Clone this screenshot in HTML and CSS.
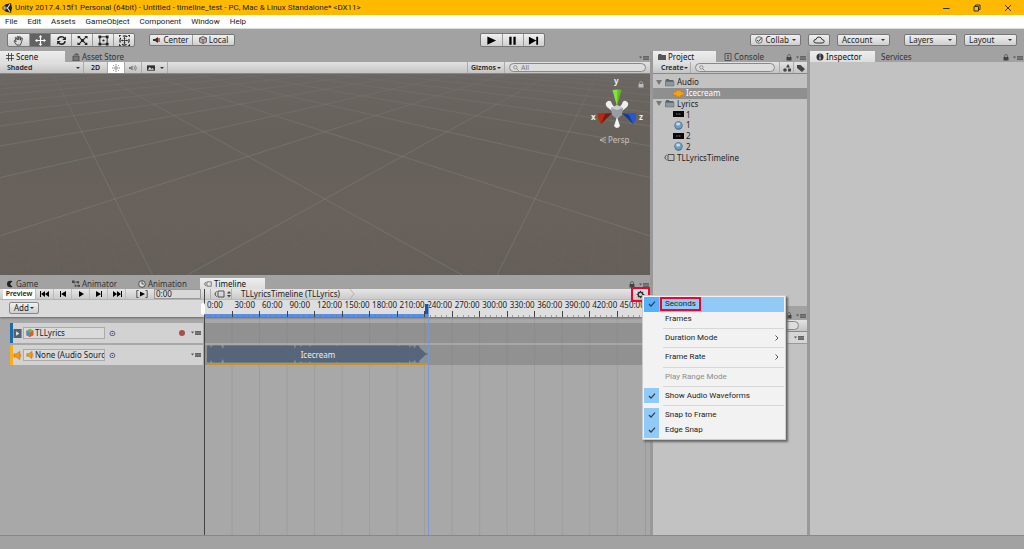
FILE: index.html
```html
<!DOCTYPE html>
<html lang="en">

<head>
    <meta charset="UTF-8">
    <meta name="viewport" content="width=device-width, initial-scale=1.0">
    <title>Unity 2017.4.15f1 Personal</title>
    <link rel="stylesheet" href="styles.css">
</head>

<body>

    <!-- shared icons -->
    <svg class="defs" width="0" height="0">
        <symbol id="lock" viewBox="0 0 6 7"><path d="M0.500 3h5v3.500h-5z" fill="#444"/><path d="M1.500 3V2a1.500 1.500 0 0 1 3 0v1" fill="none" stroke="#666"/></symbol>
        <symbol id="pane-menu" viewBox="0 0 10 6"><path d="M0 1.500h3L1.500 3.500z" fill="#555"/><path d="M4 1h6v4H4z" fill="#888"/><path d="M4 1.500h6M4 3h6M4 4.500h6" stroke="#555" stroke-width=".7"/></symbol>
        <symbol id="folder" viewBox="0 0 10 9"><path d="M1 8V2l1-1h2l1 1h4v6z" fill="#586266"/><path d="M1 8V3.500h8.500V8z" fill="#8a999c" stroke="#59666a" stroke-width=".5"/></symbol>
        <symbol id="search" viewBox="0 0 7 7"><circle cx="2.700" cy="2.700" r="2" fill="none" stroke="#777" stroke-width=".8"/><path d="M4.200 4.200L6.500 6.500" stroke="#777"/></symbol>
        <symbol id="timeline-icon" viewBox="0 0 11 8"><path d="M4 1h6v6H4z" fill="none" stroke="#444" stroke-width=".9"/><path d="M2.700 1.500Q1 2.500 1 4t1.700 2.500" fill="none" stroke="#444" stroke-width="1"/></symbol>
        <symbol id="material" viewBox="0 0 10 10"><circle cx="5" cy="5" r="4.600" fill="#426a8a"/><circle cx="5" cy="4.600" r="3.800" fill="#719dc0"/><ellipse cx="4.600" cy="3.300" rx="2.300" ry="1.700" fill="#c5dcea"/></symbol>
        <symbol id="texture" viewBox="0 0 11 7"><path d="M0 0h11v6H0z" fill="#080808"/><path d="M3 3h5" stroke="#999" stroke-dasharray="1 .5" stroke-width=".8"/></symbol>
        <symbol id="check" viewBox="0 0 8 8"><path d="M1 4l2 2.200L7 1.700" fill="none" stroke="#263b50" stroke-width="1.200"/></symbol>
        <symbol id="arrow" viewBox="0 0 5 8"><path d="M1.500 1.500L4 4 1.500 6.500" fill="none" stroke="#444" stroke-width=".9"/></symbol>
        <symbol id="speaker" viewBox="0 0 10 10"><path d="M1 3.300h2.500L7.500 0.500v9L3.500 6.700H1z" fill="#f59b12" stroke="#ad6807" stroke-width=".6"/><path d="M8.500 3v4" stroke="#b77519" stroke-width=".8"/></symbol>
    </svg>

    <div class="editor">
        <header class="titlebar">
            <svg class="logo" viewBox="0 0 12 12"><path d="M0 6l4.500-4.500L10.800.2 12 6l-1.200 5.800-6.300-1.300z" fill="#222"/><path d="M6.500 6L9.500 1.500M6.500 6l3 4.500M6.500 6H2" stroke="#ececec" stroke-width="1.300" fill="none"/><path d="M4 3.500L2 6l2 2.500" stroke="#ececec" fill="none"/></svg>
            <span class="title-text">Unity 2017.4.15f1 Personal (64bit) - Untitled - timeline_test - PC, Mac &amp; Linux Standalone* &lt;DX11&gt;</span>
            <div class="window-buttons">
                <button aria-label="Minimize"><svg viewBox="0 0 8 8"><path d="M1 4.500h6.500"/></svg></button>
                <button aria-label="Restore"><svg viewBox="0 0 8 8"><path d="M1 2.500h4.500V7H1zM2.500 2.500V1H7v4.500H5.500"/></svg></button>
                <button aria-label="Close"><svg viewBox="0 0 8 8"><path d="M1 1l6 6M7 1L1 7"/></svg></button>
            </div>
        </header>

        <nav class="menubar">
            <button>File</button><button>Edit</button><button>Assets</button><button>GameObject</button><button>Component</button><button>Window</button><button>Help</button>
        </nav>

        <div class="toolbar">
            <div class="toolbar-left">
                <div class="group tools">
                    <button aria-label="Hand"><svg viewBox="0 0 12 12"><path d="M4 11L1.500 7.500Q.8 6 2 6l1.300 1.400L2.300 3q.8-1.200 1.400 0L4.700 5.500 4.600 1.700q.9-1 1.400 0l.3 3.500.7-3.300q1-.9 1.300.1L8 5.700l1.200-2.500q1-.6 1.100.4L9.300 8 8 11z" fill="none" stroke="#222" stroke-width=".8"/></svg></button>
                    <button class="active" aria-label="Move"><svg viewBox="0 0 12 12"><path d="M6 1v10M1 6h10" stroke="#fff" stroke-width="1.300"/><path d="M6 0l2 2.500H4zM6 12L4 9.500h4zM0 6l2.500-2v4zM12 6L9.500 8V4z" fill="#fff"/></svg></button>
                    <button aria-label="Rotate"><svg viewBox="0 0 12 12"><path d="M2 5.300Q2.500 2 6 2q2 0 3.300 1.500M10 6.700Q9.500 10 6 10q-2 0-3.300-1.500" fill="none" stroke="#222" stroke-width="1.600"/><path d="M10.800 1.500v4h-4zM1.200 10.500v-4h4z" fill="#222"/></svg></button>
                    <button aria-label="Scale"><svg viewBox="0 0 12 12"><path d="M2 2l8 8M10 2l-8 8" stroke="#222" stroke-width="1.200"/><path d="M0.500 1H4L1 4zM11.500 1v3L8 1zM.5 11V8L4 11zM11.500 11H8l3-3zM4.300 4.300h3.400v3.400H4.300z" fill="#222"/></svg></button>
                    <button aria-label="Rect"><svg viewBox="0 0 12 12"><path d="M2 2h8v8H2z" fill="none" stroke="#222"/><path d="M.5.5h3v3h-3zM8.500.5h3v3h-3zM.5 8.500h3v3h-3zM8.500 8.500h3v3h-3z" fill="#222"/><circle cx="6" cy="6" r="1.200" fill="#222"/></svg></button>
                    <button aria-label="Transform"><svg viewBox="0 0 12 12"><circle cx="6" cy="6" r="5" fill="none" stroke="#222" stroke-width="1.300" stroke-dasharray="5.200 2.650" stroke-dashoffset="2.600"/><path d="M6 3v6M3 6h6" stroke="#222" stroke-width=".8"/><path d="M6 2l1.200 2H4.800zM6 10L4.800 8h2.400zM2 6l2-1.200v2.400zM10 6L8 7.200V4.800zM0 0h2.500L0 2.500zM12 0v2.500L9.500 0zM0 12V9.500L2.500 12zM12 12H9.500L12 9.500z" fill="#222"/></svg></button>
                </div>
                <div class="group pivots">
                    <button><svg viewBox="0 0 8 8"><path d="M0 3h2l3-2v6L2 5H0z" fill="#333"/><path d="M5 2h2v4H5z" fill="#bf6363"/></svg>Center</button>
                    <button><svg viewBox="0 0 8 8"><path d="M4 .5L7.500 2v4L4 7.500.5 6V2zM.5 2L4 3.500 7.500 2M4 3.500v4" fill="#c8a1a1" stroke="#444" stroke-width=".7"/></svg>Local</button>
                </div>
            </div>
            <div class="group play">
                <button aria-label="Play"><svg viewBox="0 0 12 12"><path d="M1.500 1.500L11 6l-9.500 4.500z"/></svg></button>
                <button aria-label="Pause"><svg viewBox="0 0 12 12"><path d="M2.500 2h2.500v8.500H2.500zM7 2h2.500v8.500H7z"/></svg></button>
                <button aria-label="Step"><svg viewBox="0 0 12 12"><path d="M1 2l8 4-8 4.500zM9 2h2v8.500H9z"/></svg></button>
            </div>
            <div class="toolbar-right">
                <button class="drop"><svg viewBox="0 0 8 8"><circle cx="4" cy="4" r="3.300" fill="#ddd" stroke="#666" stroke-width=".9"/><path d="M2 4l1.500 1.500L7 1.500" fill="none" stroke="#444"/></svg>Collab<i class="caret"></i></button>
                <button class="drop cloud" aria-label="Cloud"><svg viewBox="0 0 12 8"><path d="M3 7Q.8 7 .8 5.200T3 3.500Q3.500 1 6 1t3 2.600q2.200 0 2.200 1.700T9 7z" fill="none" stroke="#222" stroke-width=".9"/></svg></button>
                <button class="drop wide">Account<i class="caret"></i></button>
                <button class="drop wide layers">Layers<i class="caret"></i></button>
                <button class="drop wide">Layout<i class="caret"></i></button>
            </div>
        </div>

        <main class="workspace">
            <div class="column">
                <section class="scene-panel">
                    <div class="tabs">
                        <button class="tab selected scene-tab"><svg viewBox="0 0 8 8"><path d="M2.500 0v8M5.500 0v8M0 2.500h8M0 5.500h8" stroke="#333" stroke-width=".8"/></svg>Scene</button>
                        <button class="tab"><svg viewBox="0 0 8 8"><path d="M1 3h6v5H1zM3 2V1h3v1" fill="#777" stroke="#444" stroke-width=".8"/></svg>Asset Store</button>
                        <span class="pane-tools"><svg class="menu-icon"><use href="#pane-menu"/></svg></span>
                    </div>
                    <div class="subbar">
                        <button class="shaded">Shaded<i class="caret"></i></button>
                        <button class="small-2d">2D</button>
                        <button class="lit" aria-label="Lighting"><svg viewBox="0 0 8 8"><circle cx="4" cy="4" r="1.300" fill="none" stroke="#555" stroke-width=".7"/><path d="M4 0v1.500M4 6.500V8M0 4h1.500M6.500 4H8M1.200 1.200l1 1M5.800 5.800l1 1M1.200 6.800l1-1M5.800 2.200l1-1" stroke="#555" stroke-width=".7"/></svg></button>
                        <button class="tool" aria-label="Audio"><svg viewBox="0 0 9 8"><path d="M0 3h2l2-2v6L2 5H0z" fill="#777"/><path d="M5.500 2q1.500 2 0 4M7 1q2.500 3 0 6" fill="none" stroke="#666" stroke-width=".8"/></svg></button>
                        <button class="effects" aria-label="Effects"><svg viewBox="0 0 9 8"><path d="M0 1h9v6H0z" fill="#333"/><path d="M1 6l2-3 2 2 1-1 2 2z" fill="#ddd"/></svg><i class="caret"></i></button>
                        <button class="gizmos">Gizmos<i class="caret"></i></button>
                        <label class="searchbox"><svg><use href="#search"/></svg><input type="text" value="All" aria-label="Search scene"></label>
                    </div>
                    <div class="scene">
                        <svg class="scene-grid" id="sceneGrid" viewBox="0 0 650 201" preserveAspectRatio="xMidYMin slice"></svg>
                        <div class="gizmo">
                            <svg viewBox="0 0 52 60" width="52" height="60">
                                <path d="M16 20q-3-4 1-6 3-1 4 3l4 5-4 2zM36 20q3-4-1-6-3-1-4 3l-4 5 4 2z" fill="#eceeef"/>
                                <path d="M21.500 3q4.500-1.500 9 0L26 19z" fill="#65b925"/><path d="M21.500 3h5L26 19z" fill="#88df44"/>
                                <path d="M20 21l6-3 6 3-1 7-5 4-5-4z" fill="#999da2"/><path d="M20 21l6-3 6 3-6 2z" fill="#c8cbd0"/>
                                <path d="M21 26L7 26q-1 6 3 11z" fill="#b52a16"/><path d="M21 26L10 37l4-10z" fill="#731c13"/>
                                <path d="M31 26h14q1 6-3 11z" fill="#2756cf"/><path d="M31 26l11 11-4-9z" fill="#16388e"/>
                                <path d="M26 30l3 9q-3 4-6 0z" fill="#f4f4f4"/>
                            </svg>
                            <span class="axis y">y</span><span class="axis x">x</span><span class="axis z">z</span>
                            <span class="persp"><svg viewBox="0 0 7 8"><path d="M7 1L1 4l6 3M1 4h6" fill="none" stroke="#c4c2c0" stroke-width=".8"/></svg>Persp</span>
                        </div>
                        <svg class="scene-lock"><use href="#lock"/></svg>
                    </div>
                </section>

                <section class="timeline-panel">
                    <div class="tabs lower-tabs">
                        <button class="tab game-tab"><svg viewBox="0 0 8 8"><path d="M6.500 1Q1 0 1 4t5.500 3L4 4z" fill="#222"/></svg>Game</button>
                        <button class="tab animator-tab"><svg viewBox="0 0 9 8"><path d="M0 0h3v3H0zM5 1h3v2H5zM3 5h2v2H3zM6 5h3v2H6z" fill="#444"/><path d="M3 2h2M2 3l2 2M7 3v2" stroke="#444" stroke-width=".7"/></svg>Animator</button>
                        <button class="tab animation-tab"><svg viewBox="0 0 8 8"><circle cx="4" cy="4" r="3.300" fill="#ddd" stroke="#333" stroke-width=".8"/><path d="M4 1.500V4h2" fill="none" stroke="#333" stroke-width=".8"/></svg>Animation</button>
                        <button class="tab selected timeline-tab"><svg viewBox="0 0 11 8"><use href="#timeline-icon"/></svg>Timeline</button>
                        <span class="pane-tools"><svg class="lock-icon"><use href="#lock"/></svg><svg class="menu-icon"><use href="#pane-menu"/></svg></span>
                    </div>

                    <div class="timeline">
                        <div class="track-side">
                            <div class="transport">
                                <button class="preview">Preview</button>
                                <button aria-label="First frame"><svg viewBox="0 0 10 8"><path d="M0 1h1v6H0zM1 4l4-3v6zM5 4l4-3v6z"/></svg></button>
                                <button aria-label="Previous frame"><svg viewBox="0 0 10 8"><path d="M2 1h1v6H2zM3 4l5-3v6z"/></svg></button>
                                <button aria-label="Play timeline"><svg viewBox="0 0 10 8"><path d="M3 1l5 3-5 3z"/></svg></button>
                                <button aria-label="Next frame"><svg viewBox="0 0 10 8"><path d="M2 1l5 3-5 3zM7 1h1v6H7z"/></svg></button>
                                <button aria-label="Last frame"><svg viewBox="0 0 10 8"><path d="M1 1l4 3-4 3zM5 1l4 3-4 3zM9 1h1v6H9z"/></svg></button>
                                <button class="range" aria-label="Play range"><svg viewBox="0 0 12 8"><path d="M4 1.500L9 4 4 6.500z"/><path d="M2.500.5H.8v7h1.700M9.500.5h1.700v7H9.500" fill="none" stroke="#333" stroke-width=".8"/></svg></button>
                                <input class="time" type="text" value="0:00" aria-label="Current time">
                            </div>
                            <div class="add-row"><button class="add">Add<i class="caret"></i></button></div>
                            <div class="tracks">
                                <div class="track blue">
                                    <svg class="track-icon" viewBox="0 0 10 10"><path d="M.5 0h9v10h-9z" fill="#52636c"/><path d="M3.500 2.500L7 5 3.500 7.500z" fill="#e6edf0"/></svg>
                                    <label class="binding"><svg viewBox="0 0 9 9"><path d="M4.500 0L8.500 2v5l-4 2-4-2V2z" fill="#d95b32"/><path d="M4.500 0l4 2-4 2-4-2z" fill="#79b651"/><path d="M.5 2l4 2v5l-4-2z" fill="#4d90c7"/></svg><input type="text" value="TLLyrics" aria-label="Track binding"></label>
                                    <button class="picker" aria-label="Pick object">⊙</button>
                                    <button class="record" aria-label="Record"></button>
                                    <svg class="menu-icon"><use href="#pane-menu"/></svg>
                                </div>
                                <div class="track orange">
                                    <svg class="track-icon" viewBox="0 0 10 10"><use href="#speaker"/></svg>
                                    <label class="binding"><svg viewBox="0 0 10 10"><use href="#speaker"/></svg><input type="text" value="None (Audio Source)" aria-label="Audio binding"></label>
                                    <button class="picker" aria-label="Pick audio source">⊙</button>
                                    <svg class="menu-icon"><use href="#pane-menu"/></svg>
                                </div>
                            </div>
                        </div>

                        <div class="time-side">
                            <div class="crumbs">
                                <button class="asset-pick" aria-label="Select timeline"><svg width="11" height="8"><use href="#timeline-icon"/></svg><svg width="4" height="8" viewBox="0 0 4 8"><path d="M0 3.500L2 1l2 2.500zM0 5l2 2.500L4 5z" fill="#444"/></svg></button>
                                <span class="crumb">TLLyricsTimeline (TLLyrics)</span>
                                <svg class="crumb-end" viewBox="0 0 6 10"><path d="M1 0l4 5-4 5" fill="none" stroke="#aaa" stroke-width=".8"/></svg>
                                <div class="options">
                                    <button class="gear" aria-label="Timeline options"><svg viewBox="0 0 10 10"><circle cx="5" cy="5" r="2.500" fill="none" stroke="#333" stroke-width="1.500"/><path d="M5 .8v1.500M5 7.700v1.500M.8 5h1.500M7.700 5h1.500M2 2l1 1M7 7l1 1M8 2L7 3M3 7L2 8" stroke="#333" stroke-width="1.200"/></svg></button>
                                    <div class="context-menu" role="menu">
                                        <button class="item on hot" role="menuitem"><span class="mark"><svg><use href="#check"/></svg></span><span class="boxed">Seconds</span></button>
                                        <button class="item" role="menuitem"><span class="mark"></span>Frames</button>
                                        <hr>
                                        <button class="item" role="menuitem"><span class="mark"></span>Duration Mode<svg class="more"><use href="#arrow"/></svg></button>
                                        <hr>
                                        <button class="item" role="menuitem"><span class="mark"></span>Frame Rate<svg class="more"><use href="#arrow"/></svg></button>
                                        <hr>
                                        <button class="item" role="menuitem" disabled><span class="mark"></span>Play Range Mode</button>
                                        <hr>
                                        <button class="item on" role="menuitem"><span class="mark"><svg><use href="#check"/></svg></span>Show Audio Waveforms</button>
                                        <hr>
                                        <button class="item on" role="menuitem"><span class="mark"><svg><use href="#check"/></svg></span>Snap to Frame</button>
                                        <button class="item on" role="menuitem"><span class="mark"><svg><use href="#check"/></svg></span>Edge Snap</button>
                                    </div>
                                </div>
                            </div>
                            <div class="time-area">
                                <div class="ruler" id="ruler"></div>
                                <div class="lanes">
                                    <div class="lane"></div>
                                    <div class="lane"><div class="clip"><svg id="wave" viewBox="0 0 222 18" preserveAspectRatio="none"></svg><span>Icecream</span></div></div>
                                </div>
                                <div class="duration"></div>
                            </div>
                        </div>
                    </div>
                </section>
            </div>

            <div class="column">
                <section class="project-panel">
                    <div class="tabs">
                        <button class="tab selected project-tab"><svg viewBox="0 0 8 8"><path d="M0 7V2l1-1h2l1 1h4v5z" fill="#555"/></svg>Project</button>
                        <button class="tab console-tab"><svg viewBox="0 0 8 8"><path d="M1 .5h6v7H1zM3 2.500h2M3 4h2M3 5.500h2" fill="none" stroke="#444" stroke-width=".8"/></svg>Console</button>
                        <span class="pane-tools"><svg class="lock-icon"><use href="#lock"/></svg><svg class="menu-icon"><use href="#pane-menu"/></svg></span>
                    </div>
                    <div class="subbar">
                        <button class="create">Create<i class="caret"></i></button>
                        <label class="searchbox"><svg><use href="#search"/></svg><input type="text" aria-label="Search project"></label>
                        <button class="tool" aria-label="Filter by type"><svg viewBox="0 0 8 8"><circle cx="2" cy="6" r="1.800" fill="#444"/><path d="M5 0l2 3.500H3zM5 4.500h3v3H5z" fill="#444"/></svg></button>
                        <button class="tool" aria-label="Filter by label"><svg viewBox="0 0 8 8"><path d="M0 1h3.500L8 5 5 8 0 4z" fill="#444"/></svg></button>
                    </div>
                    <ul class="tree">
                        <li><i class="fold"></i><svg><use href="#folder"/></svg>Audio</li>
                        <li class="child current"><svg viewBox="0 0 12 10"><path d="M0 5l1.500-2.500L3 3.500 4 .5 6 2 8 .5l1 3 1.500-1L12 5l-1.500 2.500-1.500-1-1 3-2-1.500-2 1.500-1-3-1.500 1z" fill="#f7a01b" stroke="#b96e0d" stroke-width=".5"/></svg>Icecream</li>
                        <li><i class="fold"></i><svg><use href="#folder"/></svg>Lyrics</li>
                        <li class="child"><svg><use href="#texture"/></svg>1</li>
                        <li class="child"><svg><use href="#material"/></svg>1</li>
                        <li class="child"><svg><use href="#texture"/></svg>2</li>
                        <li class="child"><svg><use href="#material"/></svg>2</li>
                        <li class="asset"><svg><use href="#timeline-icon"/></svg>TLLyricsTimeline</li>
                    </ul>
                </section>
                <section class="lower-panel">
                    <div class="tabs"><span class="pane-tools"><svg class="lock-icon"><use href="#lock"/></svg><svg class="menu-icon"><use href="#pane-menu"/></svg></span></div>
                    <div class="subbar"><label class="searchbox"><input type="text" aria-label="Search hierarchy"></label></div>
                    <div class="strip"><svg class="menu-icon"><use href="#pane-menu"/></svg></div>
                </section>
            </div>

            <section class="inspector-panel">
                <div class="tabs">
                    <button class="tab selected inspector-tab"><svg viewBox="0 0 8 8"><circle cx="4" cy="4" r="3.500" fill="#333"/><path d="M4 1.500v1M4 3.500V6.500" stroke="#eee" stroke-width="1.100"/></svg>Inspector</button>
                    <button class="tab">Services</button>
                    <span class="pane-tools"><svg class="lock-icon"><use href="#lock"/></svg><svg class="menu-icon"><use href="#pane-menu"/></svg></span>
                </div>
            </section>
        </main>

        <footer class="statusbar"></footer>
    </div>

    <script src="script.js"></script>
</body>

</html>
```

FILE: styles.css
```css
* {
    box-sizing: border-box;
}

body {
    margin: 0;
    font-family: "Noto Sans", sans-serif;
    font-size: 8px;
    line-height: 10px;
    color: #222;
    background-color: #a2a2a2;
}

button,
input {
    margin: 0;
    padding: 0;
    border: 0;
    background: none;
    font: inherit;
    color: inherit;
}

svg {
    flex: none;
    display: block;
}

.defs {
    position: absolute;
}

.editor {
    display: flex;
    flex-direction: column;
    height: 100vh;
    overflow: hidden;
}

.caret {
    border: 2px solid transparent;
    border-top-color: #333;
    border-bottom: 0;
}

/* title and menu */
.titlebar,
.menubar,
.context-menu {
    font-family: Roboto, sans-serif;
}

.titlebar {
    display: flex;
    align-items: center;
    height: 15px;
    padding-left: 2px;
    background-color: #ffb900;
}

.logo {
    width: 10px;
    height: 10px;
    margin-right: 3px;
}

.window-buttons {
    display: flex;
    margin-left: auto;
}

.window-buttons button {
    width: 31px;
    padding-left: 11px;
}

.window-buttons svg {
    width: 8px;
    height: 8px;
    fill: none;
    stroke: #333;
    stroke-width: 1;
}

.menubar {
    display: flex;
    gap: 10px;
    height: 14px;
    padding: 1px 5px;
    background-color: #fff;
    border-bottom: 1px solid #ddd;
}

/* main toolbar */
.toolbar {
    display: grid;
    grid-template-columns: 1fr auto 1fr;
    align-items: center;
    height: 22px;
    padding: 0 7px;
}

.toolbar-left,
.toolbar-right,
.group {
    display: flex;
}

.toolbar-right {
    justify-content: flex-end;
    gap: 7px;
}

.group,
.drop {
    border: 1px solid #777;
    border-radius: 2px;
    background: linear-gradient(#f0f0f0, #cfcfcf);
}

.group button {
    display: flex;
    align-items: center;
    justify-content: center;
    height: 12px;
    gap: 2px;
}

.group button + button {
    border-left: 1px solid #999;
}

.tools button {
    width: 21px;
}

.tools .active {
    background-color: #626262;
}

.tools svg,
.play svg {
    width: 11px;
    height: 11px;
}

.pivots {
    margin-left: 14px;
    align-self: center;
}

.pivots button {
    width: 42px;
    height: 10px;
}

.pivots svg,
.drop svg {
    width: 8px;
    height: 8px;
}

.play button {
    width: 21px;
}

.drop {
    display: flex;
    align-items: center;
    justify-content: space-between;
    gap: 3px;
    height: 12px;
    padding: 0 4px;
}

.cloud svg {
    width: 12px;
}

.wide {
    width: 53px;
}

.layers {
    margin-left: 7px;
}

/* docked panels */
.workspace {
    flex: 1;
    min-height: 0;
    display: grid;
    grid-template-columns: 1fr 154px 214px;
    gap: 3px;
    background-color: #999;
}

.column,
.scene-panel,
.timeline-panel {
    display: flex;
    flex-direction: column;
    min-width: 0;
    min-height: 0;
}

.tabs {
    flex: none;
    display: flex;
    height: 11px;
    background-color: #a2a2a2;
}

.tab {
    display: flex;
    align-items: center;
    gap: 2px;
    padding: 0 6px;
    color: #333;
}

.tab svg {
    width: 8px;
    height: 8px;
}

.tab.selected {
    background: linear-gradient(#eee, #ddd);
    color: #111;
}

.scene-tab {
    width: 65px;
    margin-right: 1px;
}

.pane-tools {
    display: flex;
    align-items: flex-end;
    gap: 4px;
    margin-left: auto;
    padding: 0 1px 1px 0;
}

.lock-icon {
    width: 6px;
    height: 7px;
}

.menu-icon {
    width: 10px;
    height: 6px;
}

.subbar {
    flex: none;
    display: flex;
    height: 12px;
    background: linear-gradient(#e2e2e2, #c4c4c4);
    border-bottom: 1px solid #888;
    font-size: 7px;
    font-weight: 600;
}

.subbar button {
    display: flex;
    align-items: center;
    justify-content: space-between;
    padding: 0 3px;
    border-right: 1px solid #aaa;
}

.subbar svg {
    width: 8px;
    height: 8px;
}

.subbar .shaded {
    width: 84px;
    padding-left: 7px;
}

.subbar .small-2d {
    width: 24px;
    padding-left: 7px;
}

.subbar .lit {
    width: 17px;
    padding-left: 4px;
    background-color: #fff;
}

.subbar .tool {
    width: 17px;
    padding-left: 4px;
}

.subbar .effects {
    width: 26px;
    padding-left: 5px;
}

.subbar .gizmos {
    width: 38px;
    margin-left: auto;
    border-left: 1px solid #aaa;
}

.searchbox {
    display: flex;
    align-items: center;
    gap: 2px;
    width: 137px;
    height: 9px;
    margin: 1px 4px;
    padding-left: 3px;
    border: 1px solid #888;
    border-radius: 5px;
    background-color: #ddd;
    font-weight: 400;
    color: #777;
}

.searchbox svg {
    width: 6px;
    height: 6px;
}

.searchbox input {
    width: 100%;
    height: 7px;
    min-width: 0;
    outline: none;
}

/* scene view */
.scene-panel {
    flex: 224;
}

.scene {
    flex: 1;
    min-height: 0;
    position: relative;
    overflow: hidden;
    background: linear-gradient(#6b6662, #67615b 30%, #69615b 70%, #655f59);
}

.scene-grid {
    width: 100%;
    height: 100%;
}

.gizmo {
    position: absolute;
    right: 7px;
    top: 13px;
    width: 52px;
    height: 70px;
    color: #eee;
}

.axis {
    position: absolute;
    font-weight: 700;
}

.axis.y { left: 23px; top: -11px; }
.axis.x { left: 0; top: 25px; }
.axis.z { right: 0; top: 25px; }

.persp {
    position: absolute;
    left: 8px;
    top: 48px;
    display: flex;
    align-items: center;
    gap: 2px;
    color: #c4c2c0;
}

.persp svg {
    width: 7px;
    height: 8px;
}

.scene-lock {
    position: absolute;
    right: 6px;
    top: 7px;
    width: 6px;
    height: 7px;
    filter: invert(1);
}

/* timeline */
.timeline-panel {
    flex: 260;
    position: relative;
}

.lower-tabs {
    height: 14px;
    padding-top: 3px;
}

.lower-tabs .game-tab { width: 66px; }
.lower-tabs .animator-tab { width: 66px; }
.lower-tabs .animation-tab { width: 68px; }
.lower-tabs .timeline-tab { width: 65px; padding: 0 4px; }
.timeline-tab svg { width: 8px; }

.timeline {
    flex: 1;
    min-height: 0;
    display: grid;
    grid-template-columns: 205px 1fr;
    background-color: #a8a8a8;
}

.track-side {
    position: relative;
    border-right: 1px solid #444;
}

/* playhead handle at time zero */
.track-side::after {
    content: "";
    position: absolute;
    right: -1px;
    top: 14px;
    width: 4px;
    height: 12px;
    border-radius: 2px;
    background-color: #fff;
}

.transport,
.crumbs {
    display: flex;
    align-items: center;
    height: 11px;
    background: linear-gradient(#e6e6e6, #cacaca);
}

.transport {
    padding: 0 3px;
    border-bottom: 1px solid #bbb;
}

.transport button {
    width: 18px;
    height: 10px;
    padding: 0 4px;
    border-right: 1px solid #bbb;
}

.transport svg {
    width: 10px;
    height: 8px;
}

.transport .preview {
    width: 33px;
    padding: 0 2px;
    background-color: #fff;
    font-size: 7px;
    font-weight: 600;
}

.transport .range {
    margin-left: 8px;
    padding: 0 2px;
    border: 0;
    width: 20px;
}

.transport .range svg {
    width: 12px;
}

.time {
    flex: 1;
    min-width: 0;
    height: 10px;
    padding-left: 1px;
    border: 1px solid #999;
    background-color: #d8d8d8;
}

.add-row {
    height: 17px;
    padding: 2px 9px;
    background-color: #dadada;
    box-shadow: 0 1px 2px #666;
}

.add {
    display: flex;
    align-items: center;
    gap: 1px;
    height: 12px;
    padding: 0 4px;
    border: 1px solid #888;
    border-radius: 2px;
    background: linear-gradient(#f0f0f0, #cfcfcf);
}

.tracks {
    display: flex;
    flex-direction: column;
    gap: 2px;
    padding: 6px 1px 0 10px;
}

.track {
    display: flex;
    align-items: center;
    height: 20px;
    padding-right: 2px;
    border-left: 3px solid #1f6aaa;
    background-color: #d2d2d2;
}

.track.orange {
    border-left-color: #ffac1c;
}

.track-icon {
    width: 9px;
    height: 9px;
    margin-right: 1px;
}

.binding {
    display: flex;
    align-items: center;
    width: 82px;
    height: 12px;
    padding-left: 2px;
    border: 1px solid #aaa;
    background-color: #dadada;
}

.binding svg {
    width: 8px;
    height: 8px;
}

.binding input {
    flex: 1;
    min-width: 0;
    height: 10px;
    padding-left: 1px;
}

.picker {
    margin: 0 auto 0 4px;
}

.record {
    width: 6px;
    height: 6px;
    margin-right: 6px;
    border-radius: 50%;
    background-color: #ac4c4c;
}

.time-side {
    min-width: 0;
    display: flex;
    flex-direction: column;
}

.crumbs {
    flex: none;
    padding-left: 5px;
    border-bottom: 1px solid #bbb;
}

.asset-pick {
    display: flex;
    align-items: center;
    gap: 2px;
    height: 10px;
    width: 22px;
    padding-left: 3px;
    border: 1px solid #b0b0b0;
    border-width: 0 1px;
}

.crumb {
    margin-left: 9px;
}

.crumb-end {
    width: 6px;
    height: 10px;
    margin-left: 9px;
}

.options {
    position: relative;
    z-index: 5;
    margin-left: auto;
}

.gear {
    display: flex;
    align-items: center;
    justify-content: center;
    width: 19px;
    height: 15px;
    margin: -2px 0;
    border: 2px solid #f5002f;
}

.gear svg {
    width: 9px;
    height: 9px;
}

.time-area {
    flex: 1;
    min-height: 0;
    position: relative;
    margin-right: 8px;
    overflow: hidden;
    background: linear-gradient(to left, #9d9d9d 1px, transparent 1px) 0 0 / 6.3% 100%;
    box-shadow: 3px 0 #a8a8a8, 4px 0 #999;
}

.ruler {
    display: grid;
    grid-template-columns: repeat(16, 6.3%);
    height: 17px;
    background: linear-gradient(#5a8fe8, #5a8fe8) left bottom / 51.3% 3px no-repeat #dedede;
    box-shadow: 0 1px 2px #666;
}

.ruler-cell {
    height: 17px;
    padding-left: 2px;
    white-space: nowrap;
    background:
        linear-gradient(#444, #444) right bottom / 1px 6px no-repeat,
        repeating-linear-gradient(to right, transparent 0 calc(20% - 1px), #777a 0 20%) left bottom / 100% 2px no-repeat;
}

.lanes {
    display: flex;
    flex-direction: column;
    gap: 2px;
    padding-top: 6px;
}

.lane {
    height: 20px;
    padding-left: 2px;
    background: linear-gradient(to left, #8b8b8b 1px, transparent 1px) 0 0 / 6.3% 100% #919191;
}

.clip {
    position: relative;
    width: 51%;
    height: 20px;
    background-color: #87929a;
    border-bottom: 2px solid #c8922a;
}

.clip svg {
    width: 100%;
    height: 18px;
}

.clip span {
    position: absolute;
    inset: 5px 0 0;
    text-align: center;
    color: #eee;
}

/* end of the play duration, drawn over the ruler and the lanes */
.duration {
    position: absolute;
    inset: 4px auto 0 0;
    width: 51.3%;
    border-right: 1px solid #7d97cb;
    background: linear-gradient(#2453a4, #2453a4) right top / 3px 10px no-repeat;
}

/* options menu */
.context-menu {
    position: absolute;
    left: 11px;
    top: 6px;
    display: flex;
    flex-direction: column;
    width: 144px;
    height: 145px;
    padding: 1px;
    border: 1px solid #ccc;
    background-color: #f2f2f2;
    box-shadow: 2px 2px 2px #666;
}

.context-menu hr {
    flex: 1;
    width: 121px;
    margin: 0 0 0 19px;
    border: 0;
    background: linear-gradient(#d7d7d7, #d7d7d7) center / 100% 1px no-repeat;
}

.item {
    display: flex;
    align-items: center;
    height: 15px;
    text-align: left;
}

.item:disabled {
    color: #8c8c8c;
}

.mark {
    display: flex;
    align-items: center;
    justify-content: center;
    width: 15px;
    height: 15px;
    margin-right: 6px;
}

.mark svg {
    width: 8px;
    height: 8px;
}

.on .mark {
    background-color: #91c9f7;
}

.hot {
    background-color: #91c9f7;
}

.hot .mark {
    background-color: #56b0fa;
}

.boxed {
    margin-left: -5px;
    padding: 0 3px;
    border: 2px solid #f5002f;
}

.more {
    width: 5px;
    height: 8px;
    margin: 0 5px 0 auto;
}

/* project */
.project-panel {
    flex: 255;
    background-color: #c2c2c2;
}

.project-tab { width: 63px; padding: 0 5px; }
.console-tab { padding: 0 8px; }

.subbar .create {
    width: 38px;
    padding-left: 8px;
}

.project-panel .searchbox {
    flex: 1;
    min-width: 0;
}

.project-panel .tool {
    width: 14px;
    padding: 0 3px;
    border-left: 1px solid #aaa;
    border-right: 0;
}

.tree {
    display: grid;
    grid-template-rows: repeat(8, 1fr);
    height: 86px;
    margin: 3px 0 0;
    padding: 0;
    list-style: none;
}

.tree li {
    display: flex;
    align-items: center;
    gap: 2px;
    padding-left: 3px;
}

.tree svg {
    width: 11px;
    height: 9px;
}

.tree .child {
    padding-left: 20px;
}

.tree .asset {
    padding-left: 11px;
}

.tree .current {
    background-color: #8f8f8f;
    color: #fff;
}

.fold {
    border: 3px solid transparent;
    border-top: 5px solid #777;
    border-bottom: 0;
}

.lower-panel {
    flex: 229;
    background-color: #c2c2c2;
}

.lower-panel .tabs {
    height: 14px;
}

.lower-panel .subbar {
    justify-content: flex-end;
}

.lower-panel .searchbox {
    margin-right: 8px;
}

.strip {
    display: flex;
    align-items: center;
    justify-content: flex-end;
    height: 12px;
    padding-right: 3px;
    background-color: #d6d6d6;
    border-bottom: 1px solid #999;
}

.inspector-panel {
    background-color: #c2c2c2;
}

.inspector-tab {
    width: 65px;
}

.statusbar {
    height: 14px;
    border-top: 1px solid #888;
    background-color: #a2a2a2;
}
```

FILE: script.js
```js
const SVG = "http://www.w3.org/2000/svg";

function addPath(svg, d, attrs) {
    const path = document.createElementNS(SVG, "path");
    path.setAttribute("d", d);
    for (const name in attrs) {
        path.setAttribute(name, attrs[name]);
    }
    svg.appendChild(path);
}

// floor grid: both line families run to a vanishing point on the horizon
function gridLines(spacing, count) {
    const horizon = -35;
    let d = "";
    for (let i = -count; i <= count; i++) {
        const x = 325 + i * spacing;
        for (const vp of [36, 615]) {
            d += `M${vp} ${horizon}L${vp + (x - vp) * 3} ${horizon + 160 * 3}`;
        }
    }
    return d;
}

const grid = document.getElementById("sceneGrid");
grid.innerHTML = `<defs>
    <linearGradient id="fade" x2="0" y2="1"><stop offset=".3" stop-color="#000"/><stop offset="1" stop-color="#fff"/></linearGradient>
    <mask id="near" maskUnits="userSpaceOnUse" x="0" y="0" width="650" height="201"><rect width="650" height="201" fill="url(#fade)"/></mask>
    <linearGradient id="rows" gradientUnits="userSpaceOnUse" x1="0" y1="0" x2="0" y2="60"><stop offset="0" stop-color="#7c7d7e" stop-opacity=".2"/><stop offset="1" stop-color="#7c7d7e" stop-opacity=".65"/></linearGradient>
</defs>`;
addPath(grid, gridLines(210, 12), { stroke: "url(#rows)", "stroke-width": 0.8, fill: "none" });
addPath(grid, gridLines(21, 60), { stroke: "#7c7d7e", "stroke-width": 0.5, opacity: 0.2, fill: "none", mask: "url(#near)" });

// ruler labels, one every 30 seconds
const ruler = document.getElementById("ruler");
for (let i = 0; i < 16; i++) {
    const cell = document.createElement("span");
    cell.className = "ruler-cell";
    cell.textContent = i * 30 + ":00";
    ruler.appendChild(cell);
}

// waveform is loud almost everywhere, with a few dips and a fade at the end
let upper = "M0 1";
let lower = "";
const dips = { 4: 3, 5: 1, 15: 2, 16: 4, 88: 4, 94: 2, 103: 2, 130: 1, 192: 1, 203: 3, 206: 2, 208: 4 };
for (let x = 1; x < 222; x++) {
    let cut = dips[x] || 0.4;
    if (x > 212) {
        cut = Math.min(8.6, 2 + (x - 212) * 0.9);
    }
    upper += `L${x} ${cut}`;
    lower = `L${x} ${18 - cut}` + lower;
}
addPath(document.getElementById("wave"), upper + lower + "L0 17z", { fill: "#566579" });
```
